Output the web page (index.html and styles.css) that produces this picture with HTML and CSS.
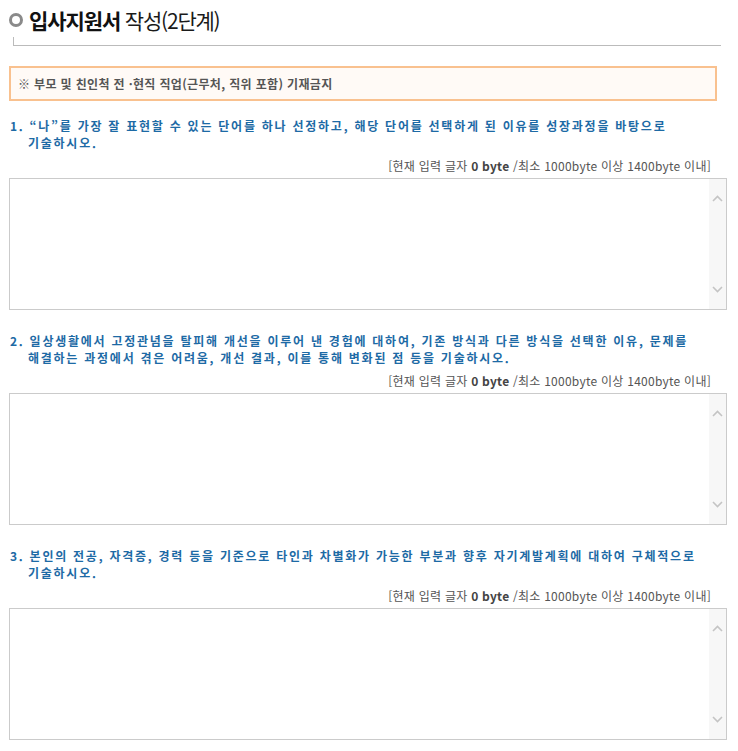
FILE: index.html
```html
<!DOCTYPE html>
<html lang="ko">
<head>
<meta charset="utf-8">
<link rel="stylesheet" href="styles.css">
</head>
<body>
<div class="page">
  <div class="title-row">
    <span class="ring"></span>
    <h2 class="title"><strong>입사지원서</strong> 작성(2단계)</h2>
  </div>
  <div class="title-rule"></div>

  <div class="notice">※ 부모 및 친인척 전 ·현직 직업(근무처, 직위 포함) 기재금지</div>

  <div class="q">
    <p class="q-text">1. “나”를 가장 잘 표현할 수 있는 단어를 하나 선정하고, 해당 단어를 선택하게 된 이유를 성장과정을 바탕으로<br>기술하시오.</p>
    <p class="counter">[현재 입력 글자 <b>0 byte</b> /최소 1000byte 이상 1400byte 이내]</p>
    <div class="box">
      <textarea class="area"></textarea>
      <div class="sbar">
        <svg class="arrow" width="11" height="7" viewBox="0 0 11 7"><path d="M1 6 L5.5 1.5 L10 6" fill="none" stroke="#c4c4c4" stroke-width="1.6"/></svg>
        <svg class="arrow" width="11" height="7" viewBox="0 0 11 7"><path d="M1 1 L5.5 5.5 L10 1" fill="none" stroke="#c4c4c4" stroke-width="1.6"/></svg>
      </div>
    </div>
  </div>

  <div class="q">
    <p class="q-text">2. 일상생활에서 고정관념을 탈피해 개선을 이루어 낸 경험에 대하여, 기존 방식과 다른 방식을 선택한 이유, 문제를<br>해결하는 과정에서 겪은 어려움, 개선 결과, 이를 통해 변화된 점 등을 기술하시오.</p>
    <p class="counter">[현재 입력 글자 <b>0 byte</b> /최소 1000byte 이상 1400byte 이내]</p>
    <div class="box">
      <textarea class="area"></textarea>
      <div class="sbar">
        <svg class="arrow" width="11" height="7" viewBox="0 0 11 7"><path d="M1 6 L5.5 1.5 L10 6" fill="none" stroke="#c4c4c4" stroke-width="1.6"/></svg>
        <svg class="arrow" width="11" height="7" viewBox="0 0 11 7"><path d="M1 1 L5.5 5.5 L10 1" fill="none" stroke="#c4c4c4" stroke-width="1.6"/></svg>
      </div>
    </div>
  </div>

  <div class="q">
    <p class="q-text">3. 본인의 전공, 자격증, 경력 등을 기준으로 타인과 차별화가 가능한 부분과 향후 자기계발계획에 대하여 구체적으로<br>기술하시오.</p>
    <p class="counter">[현재 입력 글자 <b>0 byte</b> /최소 1000byte 이상 1400byte 이내]</p>
    <div class="box">
      <textarea class="area"></textarea>
      <div class="sbar">
        <svg class="arrow" width="11" height="7" viewBox="0 0 11 7"><path d="M1 6 L5.5 1.5 L10 6" fill="none" stroke="#c4c4c4" stroke-width="1.6"/></svg>
        <svg class="arrow" width="11" height="7" viewBox="0 0 11 7"><path d="M1 1 L5.5 5.5 L10 1" fill="none" stroke="#c4c4c4" stroke-width="1.6"/></svg>
      </div>
    </div>
  </div>
</div>
</body>
</html>
```

FILE: styles.css
```css
* { box-sizing: border-box; }
html, body { margin: 0; padding: 0; background: #fff; }
body {
  font-family: "Noto Sans CJK KR", "Noto Sans", sans-serif;
  font-size: 12px;
  color: #333;
}
.page {
  width: 738px;
  padding: 9px 11px 0 9px;
}
.title-row {
  display: flex;
  align-items: center;
  height: 22px;
}
.ring {
  width: 14px;
  height: 14px;
  border-radius: 50%;
  border: 3px solid #8a8a8a;
  margin-right: 6px;
  flex: none;
}
.title {
  margin: 0;
  font-size: 21px;
  line-height: 22px;
  font-weight: 400;
  letter-spacing: -1.2px;
  color: #1a1a1a;
}
.title strong { font-weight: 700; color: #111; letter-spacing: -1.1px; }
.title-rule {
  margin: 6px 0 0 4px;
  height: 9px;
  border-left: 1px solid #bbb;
  border-bottom: 1px solid #bbb;
  width: 708px;
}
.notice {
  margin-top: 20px;
  width: 708px;
  height: 35px;
  border: 2px solid #f9c18f;
  background: #fffaf6;
  padding: 0 0 0 7px;
  line-height: 31px;
  font-weight: 700;
  color: #555;
  font-size: 12px;
  letter-spacing: 0.35px;
}
.q { margin-top: 16px; }
.q + .q { margin-top: 22px; }
.q-text {
  margin: 0;
  padding-left: 19px;
  text-indent: -18px;
  font-weight: 700;
  color: #1d6aa5;
  line-height: 17px;
  letter-spacing: 1.75px;
  white-space: nowrap;
}
.counter {
  margin: 6px 0 0;
  text-align: right;
  padding-right: 16px;
  line-height: 17px;
  color: #555;
  letter-spacing: 0.25px;
}
.counter b { font-weight: 700; color: #444; }
.box {
  margin-top: 4px;
  width: 718px;
  height: 132px;
  border: 1px solid #cbcbcb;
  display: flex;
}
.area {
  flex: 1;
  border: 0;
  resize: none;
  outline: none;
  margin: 0;
  padding: 4px;
  font-family: inherit;
  font-size: 12px;
  background: #fff;
}
.sbar {
  width: 17px;
  flex: none;
  background: #f7f7f7;
  display: flex;
  flex-direction: column;
  justify-content: space-between;
  align-items: center;
  padding: 16px 0 16px;
}
.arrow { display: block; }
```
